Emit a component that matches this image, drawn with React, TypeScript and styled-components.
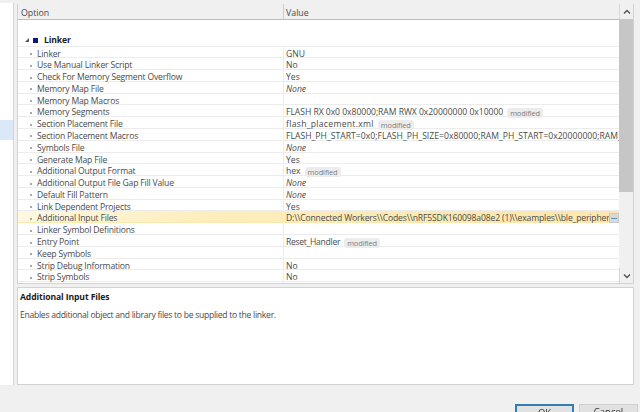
import React from "react"
import styled, { createGlobalStyle } from "styled-components"

const GlobalStyle = createGlobalStyle`
  html, body {
    margin: 0;
    padding: 0;
    width: 640px;
    height: 412px;
    overflow: hidden;
    background: #f0f0f0;
  }
  * { box-sizing: border-box; }
`

const Dialog = styled.div`
  width: 640px;
  height: 412px;
  padding-top: 3px;
  display: flex;
  flex-direction: column;
  overflow: hidden;
  font-family: "Open Sans", "Noto Sans", sans-serif;
  font-size: 8.6px;
  color: #4a4a4a;
  filter: blur(0.25px);
`

const Body = styled.div`
  height: 382px;
  display: flex;
`

const Sidebar = styled.div`
  width: 14px;
  padding-top: 117px;
  background: #fff;
  border-right: 1px solid #d4d4d4;
`

const SidebarSelection = styled.div`
  height: 20px;
  background: #d9e9f8;
`

const Panels = styled.div`
  width: 617px;
  margin-left: 3px;
  display: flex;
  flex-direction: column;
  gap: 3px;
  padding-top: 1px;
`

const GridPanel = styled.div`
  height: 280px;
  display: flex;
  background: #fff;
  border: 1px solid #d2d2d2;
  border-top: 0;
  overflow: hidden;
`

const GridMain = styled.div`
  width: 602px;
  display: flex;
  flex-direction: column;
`

const Header = styled.div`
  height: 16px;
  flex: none;
  display: grid;
  grid-template-columns: 265px 1fr;
  background: #f0f0f0;
  border-bottom: 1px solid #bdbdbd;
  font-size: 8.8px;
`

const HeaderCell = styled.div<{ $divided?: boolean }>`
  display: flex;
  align-items: center;
  padding: 2px 0 0 ${p => (p.$divided ? "2px" : "3px")};
  border-left: ${p => (p.$divided ? "1px solid #cfcfcf" : "0")};
`

const GroupRow = styled.div`
  height: 26.5px;
  flex: none;
  display: flex;
  align-items: flex-end;
  gap: 3px;
  padding-left: 7px;
  border-bottom: 1px solid #ececec;
  font-weight: 700;
  line-height: 12px;
  letter-spacing: -0.1px;
  color: #1c1c1c;
`

const GroupIcon = styled.svg`
  width: 4px;
  height: 4px;
  margin-bottom: 4px;
`

const GroupSquare = styled.span`
  width: 5px;
  height: 5px;
  margin: 0 3px 3px 1px;
  background: #14147a;
`

const Row = styled.div<{ $active?: boolean }>`
  height: 11.79px;
  flex: none;
  display: grid;
  grid-template-columns: 265px 1fr;
  border-bottom: 1px solid ${p => (p.$active ? "#fbe6ac" : "#ececec")};
  line-height: 11px;
  background: ${p =>
    p.$active ? "linear-gradient(90deg, #fff8e2 0, #fdeebd 30%, #fde7ab 100%)" : "transparent"};
`

const OptionCell = styled.div`
  position: relative;
  z-index: 1;
  display: flex;
  align-items: center;
  gap: 5px;
  padding: 2px 0 0 12px;
  white-space: nowrap;
  letter-spacing: -0.18px;
`

const Bullet = styled.span`
  width: 2px;
  height: 2px;
  border-radius: 50%;
  background: #8c8c8c;
`

const ValueCell = styled.div<{ $italic?: boolean }>`
  position: relative;
  z-index: 1;
  display: flex;
  align-items: center;
  min-width: 0;
  padding: 2px 0 0 2px;
  border-left: 1px solid #ececec;
  white-space: nowrap;
  overflow-x: clip;
  font-style: ${p => (p.$italic ? "italic" : "normal")};
`

const ValueText = styled.span<{ $tracking?: number }>`
  flex: none;
  letter-spacing: ${p => p.$tracking ?? 0}px;
`

const Modified = styled.span`
  flex: none;
  margin-left: 4px;
  padding: 0 3px;
  height: 10px;
  line-height: 10px;
  border-radius: 3px;
  background: #ececec;
  color: #7d7d7d;
  font-size: 7.4px;
  letter-spacing: -0.1px;
`

const EllipsisButton = styled.span`
  flex: none;
  width: 10px;
  height: 10px;
  margin: -2px 0 0 0;
  display: flex;
  justify-content: center;
  overflow: hidden;
  background: #d9d9d9;
  border: 1px solid #c9c9c9;
  color: #333;
  font-size: 7px;
  line-height: 6px;
  font-weight: 700;
`

const ClippedValue = styled.span`
  flex: 1;
  min-width: 0;
  overflow: hidden;
  letter-spacing: -0.15px;
`

const Scrollbar = styled.div`
  width: 14px;
  flex: none;
  display: flex;
  flex-direction: column;
  background: #f0f0f0;
`

const ScrollButton = styled.div`
  height: 15px;
  flex: none;
  display: flex;
  align-items: center;
  justify-content: center;
  border-left: 1px solid #d6d6d6;
`

const ScrollThumb = styled.div`
  height: 173px;
  flex: none;
  background: #c6c6c6;
`

const ScrollTrack = styled.div`
  flex: 1;
`

const Description = styled.div`
  height: 98px;
  padding: 3px 2px;
  background: #fff;
  border: 1px solid #d2d2d2;
`

const DescriptionTitle = styled.div`
  height: 12px;
  line-height: 12px;
  font-weight: 700;
  letter-spacing: -0.1px;
  color: #1c1c1c;
`

const DescriptionText = styled.div`
  margin-top: 6px;
  line-height: 12px;
  letter-spacing: -0.28px;
  color: #4a4a4a;
`

const Footer = styled.div`
  flex: 1;
  display: flex;
  justify-content: flex-end;
  gap: 5px;
  padding: 19px 2px 0 0;
  overflow: hidden;
`

const DialogButton = styled.div<{ $primary?: boolean }>`
  width: 59px;
  height: 21px;
  flex: none;
  text-align: center;
  line-height: 13px;
  font-size: 9.5px;
  color: #333;
  background: #e1e1e1;
  border: ${p => (p.$primary ? "2px solid #2f7fb5" : "1px solid #cfcfcf")};
`

type Item = {
  name: string
  value?: string
  italic?: boolean
  modified?: boolean
  tracking?: number
}

const items: Item[] = [
  { name: "Linker", value: "GNU" },
  { name: "Use Manual Linker Script", value: "No" },
  { name: "Check For Memory Segment Overflow", value: "Yes" },
  { name: "Memory Map File", value: "None", italic: true },
  { name: "Memory Map Macros" },
  { name: "Memory Segments", value: "FLASH RX 0x0 0x80000;RAM RWX 0x20000000 0x10000", modified: true, tracking: -0.04 },
  { name: "Section Placement File", value: "flash_placement.xml", modified: true, tracking: 0.3 },
  { name: "Section Placement Macros", value: "FLASH_PH_START=0x0;FLASH_PH_SIZE=0x80000;RAM_PH_START=0x20000000;RAM_PH_SIZE=0x10000", tracking: 0.03 },
  { name: "Symbols File", value: "None", italic: true },
  { name: "Generate Map File", value: "Yes" },
  { name: "Additional Output Format", value: "hex", modified: true },
  { name: "Additional Output File Gap Fill Value", value: "None", italic: true },
  { name: "Default Fill Pattern", value: "None", italic: true },
  { name: "Link Dependent Projects", value: "Yes" },
]

const afterActive: Item[] = [
  { name: "Linker Symbol Definitions" },
  { name: "Entry Point", value: "Reset_Handler", modified: true, tracking: -0.3 },
  { name: "Keep Symbols" },
  { name: "Strip Debug Information", value: "No" },
  { name: "Strip Symbols", value: "No" },
]

const activePath = "D:\\\\Connected Workers\\\\Codes\\\\nRF5SDK160098a08e2 (1)\\\\examples\\\\ble_peripheral\\\\ble_app"

const OptionRow = ({ item }: { item: Item }) => (
  <Row>
    <OptionCell>
      <Bullet />
      {item.name}
    </OptionCell>
    <ValueCell $italic={item.italic}>
      <ValueText $tracking={item.tracking}>{item.value}</ValueText>
      {item.modified && <Modified>modified</Modified>}
    </ValueCell>
  </Row>
)

const Chevron = ({ d }: { d: string }) => (
  <svg width="8" height="6" viewBox="0 0 8 6" fill="none" stroke="#505050" strokeWidth="1.3">
    <path d={d} />
  </svg>
)

export default function App() {
  return (
    <Dialog>
      <GlobalStyle />
      <Body>
        <Sidebar>
          <SidebarSelection />
        </Sidebar>
        <Panels>
          <GridPanel>
            <GridMain>
              <Header>
                <HeaderCell>Option</HeaderCell>
                <HeaderCell $divided>Value</HeaderCell>
              </Header>
              <GroupRow>
                <GroupIcon viewBox="0 0 4 4">
                  <path d="M4 0V4H0Z" fill="#555" />
                </GroupIcon>
                <GroupSquare />
                Linker
              </GroupRow>
              {items.map(item => (
                <OptionRow key={item.name} item={item} />
              ))}
              <Row $active>
                <OptionCell>
                  <Bullet />
                  Additional Input Files
                </OptionCell>
                <ValueCell>
                  <ClippedValue>{activePath}</ClippedValue>
                  <EllipsisButton>...</EllipsisButton>
                </ValueCell>
              </Row>
              {afterActive.map(item => (
                <OptionRow key={item.name} item={item} />
              ))}
            </GridMain>
            <Scrollbar>
              <ScrollButton>
                <Chevron d="M1 4.5L4 1.5L7 4.5" />
              </ScrollButton>
              <ScrollThumb />
              <ScrollTrack />
              <ScrollButton>
                <Chevron d="M1 1.5L4 4.5L7 1.5" />
              </ScrollButton>
            </Scrollbar>
          </GridPanel>
          <Description>
            <DescriptionTitle>Additional Input Files</DescriptionTitle>
            <DescriptionText>
              Enables additional object and library files to be supplied to the linker.
            </DescriptionText>
          </Description>
        </Panels>
      </Body>
      <Footer>
        <DialogButton $primary>OK</DialogButton>
        <DialogButton>Cancel</DialogButton>
      </Footer>
    </Dialog>
  )
}
